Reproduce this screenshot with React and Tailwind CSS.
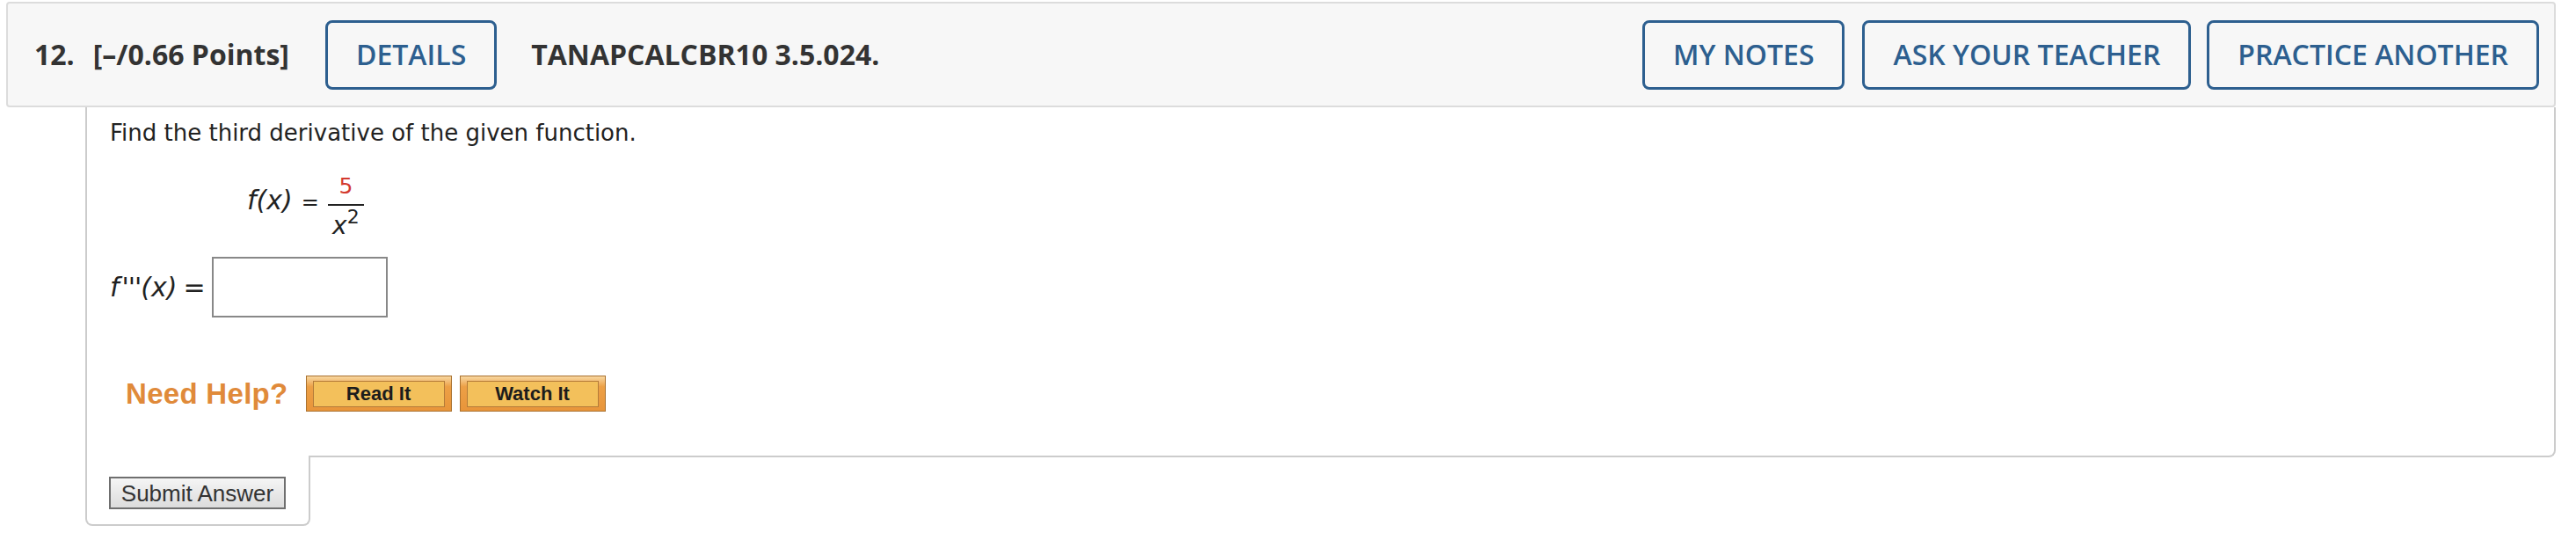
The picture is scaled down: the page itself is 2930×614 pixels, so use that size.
function HBtn({ children, className = "" }) {
  return (
    <div
      className={`h-[79px] border-[3px] border-[#2d5f8f] rounded-[8px] px-[32px] flex items-center bg-[#f7f7f7] text-[32px] font-semibold text-[#2d5f8f] whitespace-nowrap ${className}`}
    >
      {children}
    </div>
  );
}

function HelpBtn({ children, className = "" }) {
  return (
    <div
      className={`w-[166px] h-[41px] border border-[#a9712f] bg-[linear-gradient(to_bottom,#f8d7a0_0%,#eda046_30%,#e8953a_100%)] pt-[5px] pb-[4px] px-[7px] ${className}`}
    >
      <div className="h-full border border-[#b47b39] bg-[#f3c05b] flex items-center justify-center font-['Liberation_Sans',Arial,sans-serif] font-bold text-[22px] text-[#1c1c1c] leading-none">
        {children}
      </div>
    </div>
  );
}

export default function App() {
  return (
    <div className="w-[2930px] h-[614px] bg-white overflow-hidden">
      <div className="pt-[2px] pl-[7px] pr-[23px]">
        <div className="h-[120px] border-2 border-[#dcdcdc] rounded-[4px] bg-[#f7f7f7] flex items-center pl-[30px] pr-[17px] font-['Open_Sans',sans-serif]">
          <span className="text-[32px] font-bold text-[#333333] whitespace-nowrap">12.</span>
          <span className="ml-[21px] text-[32px] font-bold text-[#333333] whitespace-nowrap">[–/0.66 Points]</span>
          <HBtn className="ml-[41px]">DETAILS</HBtn>
          <span className="ml-[39px] text-[32px] font-bold text-[#333333] whitespace-nowrap">TANAPCALCBR10 3.5.024.</span>
          <div className="flex-1" />
          <HBtn>MY NOTES</HBtn>
          <HBtn className="ml-[20px]">ASK YOUR TEACHER</HBtn>
          <HBtn className="ml-[18px]">PRACTICE ANOTHER</HBtn>
        </div>
      </div>

      <div className="ml-[97px] w-[2810px]">
        <div className="h-[398px] border-l-2 border-r-2 border-b-2 border-[#cccccc] rounded-br-[8px] pl-[26px] pt-[14px] font-['Verdana','DejaVu_Sans',sans-serif] text-[#222222]">
          <p className="text-[26px] leading-[30px]">Find the third derivative of the given function.</p>

          <div className="mt-[33px] flex items-start pl-[156px]">
            <span className="mt-[11px] italic text-[30px] leading-[36px]">f(x)</span>
            <span className="mt-[13px] ml-[10px] text-[24px] leading-[36px]">=</span>
            <div className="ml-[10px] flex flex-col items-center w-[41px]">
              <span className="text-[25px] leading-[26px] text-[#d33a2f]">5</span>
              <div className="mt-[7px] w-[41px] h-[2px] bg-[#222222]" />
              <span className="mt-[8px] italic text-[28px] leading-[30px] whitespace-nowrap">
                x<sup className="not-italic text-[22px] -top-[12px]">2</sup>
              </span>
            </div>
          </div>

          <div className="mt-[20px] flex items-center">
            <span className="italic text-[30px] leading-[36px] whitespace-nowrap">
              f<span className="ml-[3px] tracking-[-1px]">'''</span>(x)
            </span>
            <span className="ml-[7px] text-[30px] leading-[36px]">=</span>
            <div className="ml-[7px] w-[200px] h-[69px] border-2 border-[#888888] bg-white" />
          </div>

          <div className="mt-[62px] flex items-center">
            <span className="ml-[18px] font-['Liberation_Sans',Arial,sans-serif] font-bold text-[33px] tracking-[0.3px] text-[#e08a3a] whitespace-nowrap">
              Need Help?
            </span>
            <HelpBtn className="ml-[20px]">Read It</HelpBtn>
            <HelpBtn className="ml-[9px]">Watch It</HelpBtn>
          </div>
        </div>

        <div className="relative -mt-[2px] w-[256px] h-[80px] bg-white border-l-2 border-r-2 border-b-2 border-[#cccccc] rounded-b-[8px] pl-[25px] pt-[24px]">
          <button className="w-[201px] h-[37px] border-2 border-[#6f6f6f] bg-[linear-gradient(to_bottom,#f5f5f5,#dcdcdc)] font-['Liberation_Sans',Arial,sans-serif] text-[26px] text-[#333333] leading-none flex items-center justify-center whitespace-nowrap">
            Submit Answer
          </button>
        </div>
      </div>
    </div>
  );
}
